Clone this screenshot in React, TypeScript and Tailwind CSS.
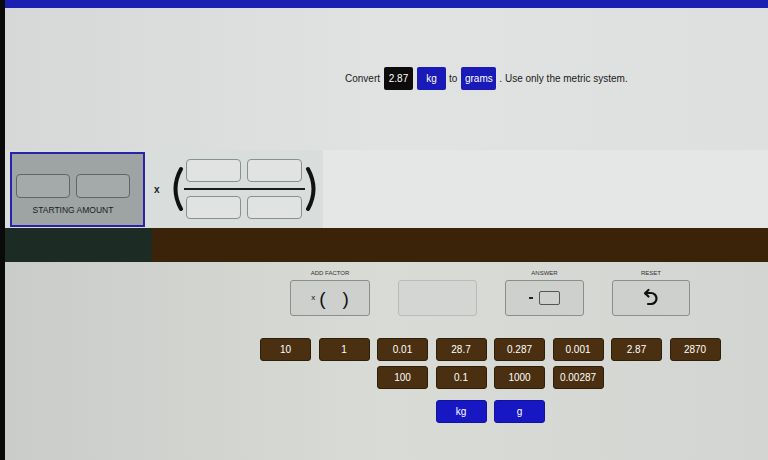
import React from "react";

const font = { fontFamily: '"Liberation Sans", Arial, sans-serif' };

function Paren({ flip }: { flip?: boolean }) {
  return (
    <svg width="14" height="46" viewBox="0 0 14 46" className={flip ? "-scale-x-100" : ""}>
      <path d="M11 3 Q0 23 11 43" fill="none" stroke="#111" strokeWidth="4" strokeLinecap="round" />
    </svg>
  );
}

function Tile({ label, blue }: { label: string; blue?: boolean }) {
  return (
    <div
      className={
        "h-[23px] w-[51px] rounded-[3px] flex items-center justify-center text-[10px] text-white " +
        (blue ? "bg-[#1717c4] border border-[#1212a0]" : "bg-[#4a3011] border border-[#2f1e08]")
      }
    >
      {label}
    </div>
  );
}

export default function App() {
  return (
    <div className="w-[768px] h-[460px] flex bg-[#0b0b0b] overflow-hidden" style={font}>
      <div className="w-[5px] shrink-0 bg-[#0a0a0a]" />
      <div className="flex-1 flex flex-col">
        {/* top blue bar */}
        <div className="h-[8px] bg-[#1c20b2]" />
        {/* question area */}
        <div className="h-[142px] bg-gradient-to-r from-[#d5d8d6] via-[#e0e3e1] to-[#dde0de] pl-[340px] pt-[59px]">
          <div className="flex items-center h-[23px] text-[10px] text-[#1a1a1a]">
            <span>Convert</span>
            <span className="ml-[4px] h-[23px] w-[29px] bg-[#0d0b0b] rounded-[2px] text-white flex items-center justify-center">2.87</span>
            <span className="ml-[4px] h-[23px] w-[29px] bg-[#1a1ab8] rounded-[2px] text-white flex items-center justify-center">kg</span>
            <span className="ml-[3px]">to</span>
            <span className="ml-[4px] h-[23px] w-[35px] bg-[#1a1ab8] rounded-[2px] text-white flex items-center justify-center">grams</span>
            <span className="ml-[3px]">. Use only the metric system.</span>
          </div>
        </div>
        {/* workspace strip */}
        <div className="h-[78px] flex bg-[#e4e7e6]">
          <div className="w-[318px] flex items-center bg-[#d9dddc]">
            <div className="ml-[5px] w-[135px] h-[75px] border-2 border-[#2a22a8] bg-[#9ea4a4] flex flex-col items-start pl-[4px] pt-[20px]">
              <div className="flex gap-[6px]">
                <div className="w-[54px] h-[24px] rounded-[4px] border border-[#60666a] bg-[#a4aaaa]" />
                <div className="w-[54px] h-[24px] rounded-[4px] border border-[#60666a] bg-[#a4aaaa]" />
              </div>
              <div className="w-[114px] text-center mt-[6px] text-[8.5px] text-[#1a1a1a]">STARTING AMOUNT</div>
            </div>
            <div className="ml-[9px] text-[10px] font-bold text-[#222]">x</div>
            <div className="ml-[10px] flex items-center">
              <Paren />
              <div className="flex flex-col items-center">
                <div className="flex gap-[6px]">
                  <div className="w-[55px] h-[23px] rounded-[4px] border border-[#8a8f90] bg-[#e0e3e2]" />
                  <div className="w-[55px] h-[23px] rounded-[4px] border border-[#8a8f90] bg-[#e0e3e2]" />
                </div>
                <div className="w-[121px] h-[2px] bg-[#1a1a1a] my-[6px]" />
                <div className="flex gap-[6px]">
                  <div className="w-[55px] h-[23px] rounded-[4px] border border-[#8a8f90] bg-[#e0e3e2]" />
                  <div className="w-[55px] h-[23px] rounded-[4px] border border-[#8a8f90] bg-[#e0e3e2]" />
                </div>
              </div>
              <Paren flip />
            </div>
          </div>
          <div className="flex-1" />
        </div>
        {/* dark band */}
        <div className="h-[34px] flex">
          <div className="w-[147px] bg-[#1c2b24]" />
          <div className="flex-1 bg-[#3a2309]" />
        </div>
        {/* controls */}
        <div className="flex-1 bg-gradient-to-r from-[#c9ccc8] via-[#d8dbd6] to-[#d2d5d1]">
          <div className="flex pl-[285px] pt-[7px] gap-[28px]">
            <div className="w-[80px] flex flex-col items-center">
              <div className="text-[6px] text-[#333] h-[11px]">ADD FACTOR</div>
              <div className="w-[80px] h-[36px] rounded-[3px] border border-[#8b8f8b] bg-[#cdd0cc] flex items-center justify-center text-[#111]">
                <span className="text-[8px] mr-[4px]">x</span>
                <span className="text-[19px] leading-none">(</span>
                <span className="w-[17px]" />
                <span className="text-[19px] leading-none">)</span>
              </div>
            </div>
            <div className="w-[79px] flex flex-col items-center">
              <div className="h-[11px]" />
              <div className="w-[79px] h-[36px] rounded-[3px] border border-[#b9bcb8] bg-[#d3d6d2]" />
            </div>
            <div className="w-[79px] flex flex-col items-center">
              <div className="text-[6px] text-[#333] h-[11px]">ANSWER</div>
              <div className="w-[79px] h-[36px] rounded-[3px] border border-[#8b8f8b] bg-[#cdd0cc] flex items-center justify-center gap-[6px]">
                <div className="w-[4px] h-[2px] bg-[#222]" />
                <div className="w-[21px] h-[14px] rounded-[2px] border border-[#555]" />
              </div>
            </div>
            <div className="w-[78px] flex flex-col items-center">
              <div className="text-[6px] text-[#333] h-[11px]">RESET</div>
              <div className="w-[78px] h-[36px] rounded-[3px] border border-[#8b8f8b] bg-[#cdd0cc] flex items-center justify-center">
                <svg width="18" height="20" viewBox="0 0 18 20">
                  <path d="M4 5 H9 A5.5 5.5 0 0 1 9 16 H6" fill="none" stroke="#111" strokeWidth="2.2" strokeLinecap="round" />
                  <path d="M6.5 2 L3 5.2 L6.5 8.5" fill="none" stroke="#111" strokeWidth="2.2" strokeLinecap="round" strokeLinejoin="round" />
                </svg>
              </div>
            </div>
          </div>
          <div className="pl-[255px] mt-[22px] grid grid-cols-[repeat(8,51px)] gap-x-[7.5px] gap-y-[5px]">
            <Tile label="10" />
            <Tile label="1" />
            <Tile label="0.01" />
            <Tile label="28.7" />
            <Tile label="0.287" />
            <Tile label="0.001" />
            <Tile label="2.87" />
            <Tile label="2870" />
            <div className="col-start-3">
              <Tile label="100" />
            </div>
            <Tile label="0.1" />
            <Tile label="1000" />
            <Tile label="0.00287" />
            <div className="col-start-4 mt-[6px]">
              <Tile label="kg" blue />
            </div>
            <div className="mt-[6px]">
              <Tile label="g" blue />
            </div>
          </div>
        </div>
      </div>
    </div>
  );
}
